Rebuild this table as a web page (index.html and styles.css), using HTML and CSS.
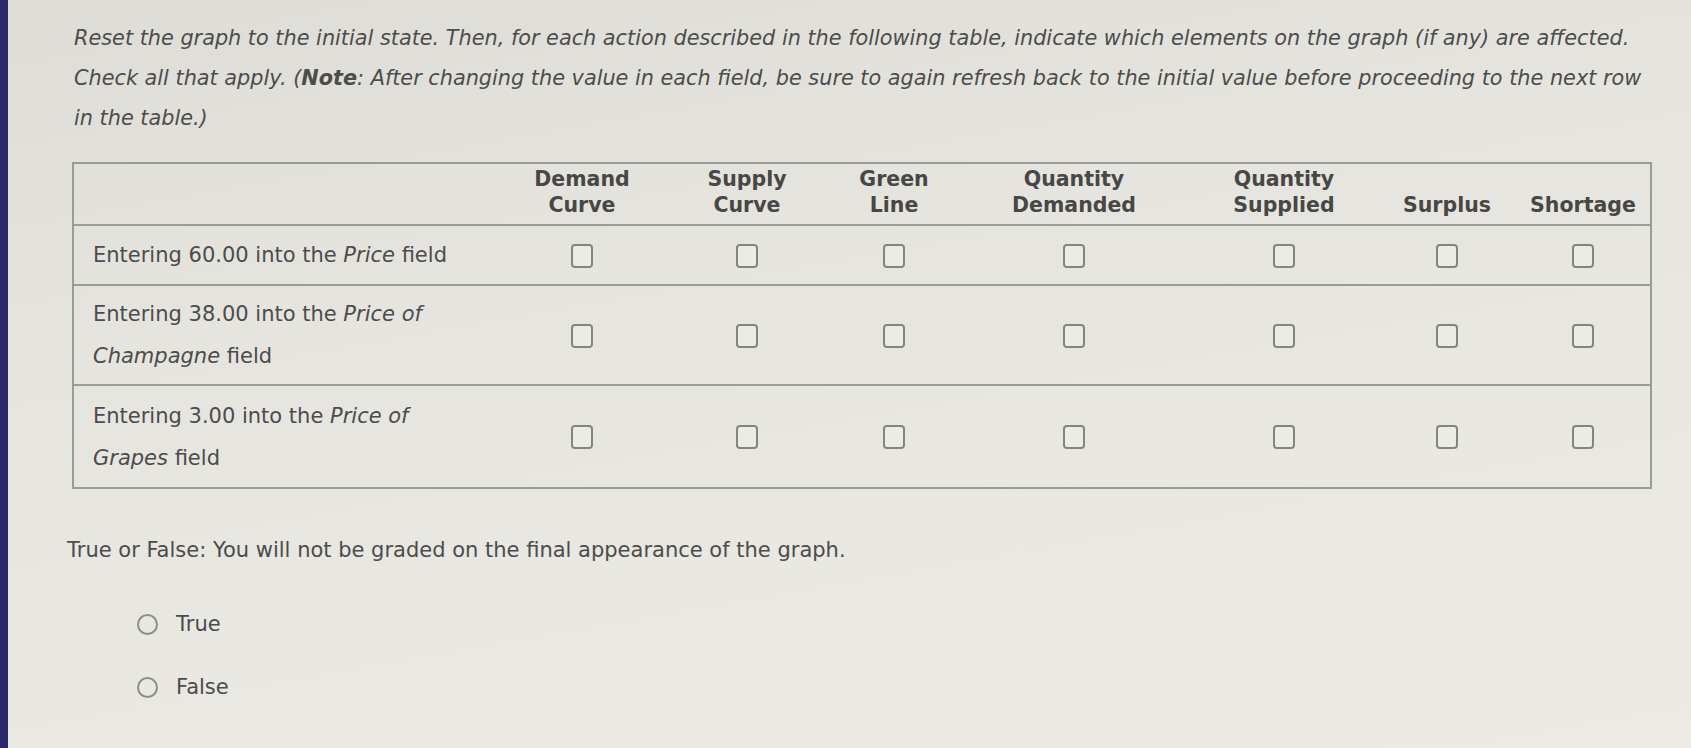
FILE: index.html
```html
<!DOCTYPE html>
<html>
<head>
<meta charset="utf-8">
<link rel="stylesheet" href="styles.css">
</head>
<body>
<div class="page">
  <p class="intro">Reset the graph to the initial state. Then, for each action described in the following table, indicate which elements on the graph (if any) are affected. Check all that apply. (<b>Note</b>: After changing the value in each field, be sure to again refresh back to the initial value before proceeding to the next row in the table.)</p>

  <table class="grid">
    <colgroup>
      <col class="c-label"><col class="c-dc"><col class="c-sc"><col class="c-gl"><col class="c-qd"><col class="c-qs"><col class="c-sp"><col class="c-sh">
    </colgroup>
    <thead>
      <tr>
        <th></th>
        <th>Demand<br>Curve</th>
        <th>Supply<br>Curve</th>
        <th>Green<br>Line</th>
        <th>Quantity<br>Demanded</th>
        <th>Quantity<br>Supplied</th>
        <th>Surplus</th>
        <th>Shortage</th>
      </tr>
    </thead>
    <tbody>
      <tr class="r1">
        <td class="label">Entering 60.00 into the <i>Price</i> field</td>
        <td><span class="cb"></span></td><td><span class="cb"></span></td><td><span class="cb"></span></td><td><span class="cb"></span></td><td><span class="cb"></span></td><td><span class="cb"></span></td><td><span class="cb"></span></td>
      </tr>
      <tr class="r2">
        <td class="label">Entering 38.00 into the <i>Price of<br>Champagne</i> field</td>
        <td><span class="cb"></span></td><td><span class="cb"></span></td><td><span class="cb"></span></td><td><span class="cb"></span></td><td><span class="cb"></span></td><td><span class="cb"></span></td><td><span class="cb"></span></td>
      </tr>
      <tr class="r3">
        <td class="label">Entering 3.00 into the <i>Price of<br>Grapes</i> field</td>
        <td><span class="cb"></span></td><td><span class="cb"></span></td><td><span class="cb"></span></td><td><span class="cb"></span></td><td><span class="cb"></span></td><td><span class="cb"></span></td><td><span class="cb"></span></td>
      </tr>
    </tbody>
  </table>

  <p class="question">True or False: You will not be graded on the final appearance of the graph.</p>

  <div class="options">
    <label class="opt"><span class="radio"></span>True</label>
    <label class="opt"><span class="radio"></span>False</label>
  </div>
</div>
</body>
</html>
```

FILE: styles.css
```css
html, body {
  margin: 0;
  padding: 0;
  height: 100%;
}

body {
  font-family: "DejaVu Sans", Verdana, sans-serif;
  color: #4c4c4a;
  background: linear-gradient(170deg, #dddcd7 0%, #e5e4df 35%, #e9e8e3 70%, #ebeae5 100%);
  overflow: hidden;
}

.page {
  min-height: 100%;
  box-sizing: border-box;
  border-left: 8px solid #2c2a6c;
  padding: 18px 30px 0 66px;
}

.intro {
  margin: 0;
  width: 1585px;
  font-size: 20.8px;
  font-style: italic;
  line-height: 40px;
}

.intro b {
  font-weight: bold;
}

.grid {
  margin: 24px 0 0 -2px;
  border-collapse: collapse;
  table-layout: fixed;
  width: 1578px;
  border: 2px solid #9c9c97;
  font-size: 21px;
}

.c-label { width: 427px; }
.c-dc { width: 164px; }
.c-sc { width: 166px; }
.c-gl { width: 128px; }
.c-qd { width: 232px; }
.c-qs { width: 188px; }
.c-sp { width: 138px; }
.c-sh { width: 135px; }

.grid th {
  height: 62px;
  box-sizing: border-box;
  padding: 2px 0 6px;
  vertical-align: bottom;
  text-align: center;
  font-weight: bold;
  font-size: 20.5px;
  line-height: 26px;
  color: #474745;
  border-bottom: 2px solid #9c9c97;
}

.grid td {
  text-align: center;
  vertical-align: middle;
  border-bottom: 2px solid #9c9c97;
  padding: 0;
}

.grid td.label {
  text-align: left;
  padding-left: 19px;
  line-height: 42px;
}

.r1 td { height: 58px; }
.r2 td { height: 98px; }
.r3 td { height: 101px; }

.cb {
  display: inline-block;
  width: 18px;
  height: 20px;
  border: 2px solid #85857f;
  border-radius: 4px;
  background: #ecebe6;
  vertical-align: middle;
}

.question {
  margin: 41px 0 0 -7px;
  font-size: 21px;
  line-height: 40px;
}

.options {
  display: flex;
  flex-direction: column;
  gap: 23px;
  margin-top: 34px;
  padding-left: 63px;
}

.opt {
  display: flex;
  align-items: center;
  gap: 18px;
  font-size: 21px;
  line-height: 40px;
}

.radio {
  display: inline-block;
  width: 17px;
  height: 17px;
  border: 2px solid #8e8e89;
  border-radius: 50%;
}
```
